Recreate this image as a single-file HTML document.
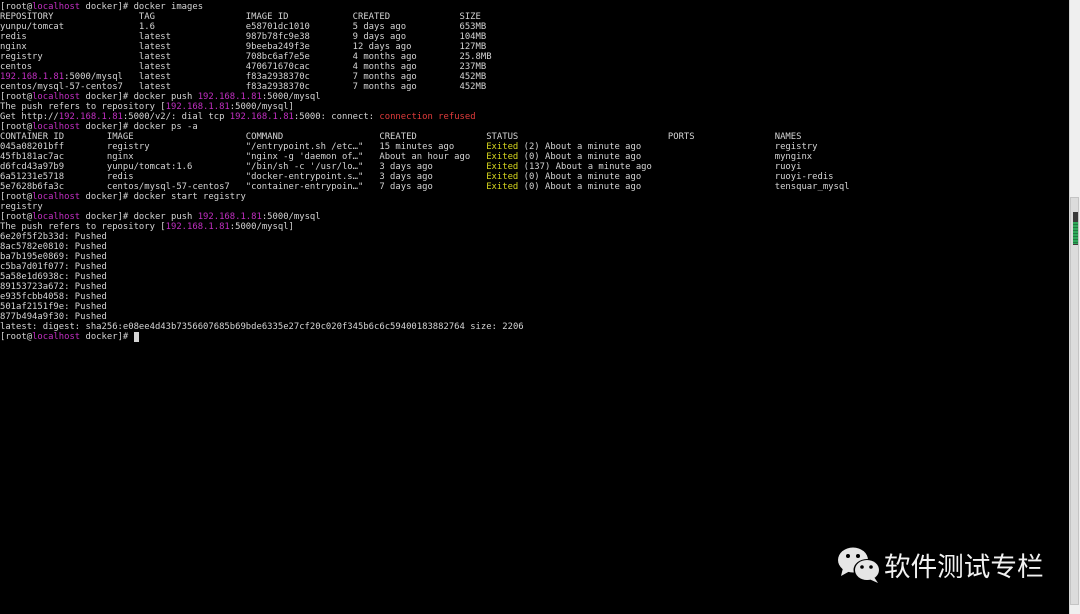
<!DOCTYPE html>
<html><head><meta charset="utf-8"><style>
html,body{margin:0;padding:0;background:#000;width:1080px;height:614px;overflow:hidden}
#t{position:absolute;left:0;top:2px;font-family:"DejaVu Sans Mono","Liberation Mono",monospace;font-size:8.9px;color:#d4d4d4}
.l{position:relative;height:10px;line-height:10px;white-space:pre}
.c{position:absolute;top:0}
.m{color:#c22fc2}.r{color:#e23c3c}.y{color:#d6d61e}
#sb{position:absolute;left:1069px;top:0;width:11px;height:614px;background:#efefef;border-left:1px solid #d8d8d8;box-sizing:border-box}
#th{position:absolute;left:1070px;top:197px;width:9px;height:408px;background:#dcdcdc;border:1px solid #c4c4c4;box-sizing:border-box}
#gr{position:absolute;left:1073px;top:212px;width:5px;height:33px;background:#3a3a3a}
#gr2{position:absolute;left:1073px;top:222px;width:5px;height:22px;background:repeating-linear-gradient(#2fa85a 0 2px,#1f7a40 2px 3px)}
#wm{position:absolute;left:884px;top:547px;font-family:"Noto Sans CJK SC",sans-serif;font-size:26.6px;color:#f2f2f2;line-height:36px}
</style></head><body>
<div id="t"><div class="l">[root@<span class="m">localhost</span> docker]# docker images</div><div class="l"><span class="c" style="left:0">REPOSITORY</span><span class="c" style="left:26ch">TAG</span><span class="c" style="left:46ch">IMAGE ID</span><span class="c" style="left:66ch">CREATED</span><span class="c" style="left:86ch">SIZE</span></div><div class="l"><span class="c" style="left:0">yunpu/tomcat</span><span class="c" style="left:26ch">1.6</span><span class="c" style="left:46ch">e58701dc1010</span><span class="c" style="left:66ch">5 days ago</span><span class="c" style="left:86ch">653MB</span></div><div class="l"><span class="c" style="left:0">redis</span><span class="c" style="left:26ch">latest</span><span class="c" style="left:46ch">987b78fc9e38</span><span class="c" style="left:66ch">9 days ago</span><span class="c" style="left:86ch">104MB</span></div><div class="l"><span class="c" style="left:0">nginx</span><span class="c" style="left:26ch">latest</span><span class="c" style="left:46ch">9beeba249f3e</span><span class="c" style="left:66ch">12 days ago</span><span class="c" style="left:86ch">127MB</span></div><div class="l"><span class="c" style="left:0">registry</span><span class="c" style="left:26ch">latest</span><span class="c" style="left:46ch">708bc6af7e5e</span><span class="c" style="left:66ch">4 months ago</span><span class="c" style="left:86ch">25.8MB</span></div><div class="l"><span class="c" style="left:0">centos</span><span class="c" style="left:26ch">latest</span><span class="c" style="left:46ch">470671670cac</span><span class="c" style="left:66ch">4 months ago</span><span class="c" style="left:86ch">237MB</span></div><div class="l"><span class="c" style="left:0"><span class="m">192.168.1.81</span>:5000/mysql</span><span class="c" style="left:26ch">latest</span><span class="c" style="left:46ch">f83a2938370c</span><span class="c" style="left:66ch">7 months ago</span><span class="c" style="left:86ch">452MB</span></div><div class="l"><span class="c" style="left:0">centos/mysql-57-centos7</span><span class="c" style="left:26ch">latest</span><span class="c" style="left:46ch">f83a2938370c</span><span class="c" style="left:66ch">7 months ago</span><span class="c" style="left:86ch">452MB</span></div><div class="l">[root@<span class="m">localhost</span> docker]# docker push <span class="m">192.168.1.81</span>:5000/mysql</div><div class="l">The push refers to repository [<span class="m">192.168.1.81</span>:5000/mysql]</div><div class="l">Get http://<span class="m">192.168.1.81</span>:5000/v2/: dial tcp <span class="m">192.168.1.81</span>:5000: connect: <span class="r">connection refused</span></div><div class="l">[root@<span class="m">localhost</span> docker]# docker ps -a</div><div class="l"><span class="c" style="left:0">CONTAINER ID</span><span class="c" style="left:20ch">IMAGE</span><span class="c" style="left:46ch">COMMAND</span><span class="c" style="left:71ch">CREATED</span><span class="c" style="left:91ch">STATUS</span><span class="c" style="left:125ch">PORTS</span><span class="c" style="left:145ch">NAMES</span></div><div class="l"><span class="c" style="left:0">045a08201bff</span><span class="c" style="left:20ch">registry</span><span class="c" style="left:46ch">"/entrypoint.sh /etc…"</span><span class="c" style="left:71ch">15 minutes ago</span><span class="c" style="left:91ch"><span class="y">Exited</span> (2) About a minute ago</span><span class="c" style="left:145ch">registry</span></div><div class="l"><span class="c" style="left:0">45fb181ac7ac</span><span class="c" style="left:20ch">nginx</span><span class="c" style="left:46ch">"nginx -g 'daemon of…"</span><span class="c" style="left:71ch">About an hour ago</span><span class="c" style="left:91ch"><span class="y">Exited</span> (0) About a minute ago</span><span class="c" style="left:145ch">mynginx</span></div><div class="l"><span class="c" style="left:0">d6fcd43a97b9</span><span class="c" style="left:20ch">yunpu/tomcat:1.6</span><span class="c" style="left:46ch">"/bin/sh -c '/usr/lo…"</span><span class="c" style="left:71ch">3 days ago</span><span class="c" style="left:91ch"><span class="y">Exited</span> (137) About a minute ago</span><span class="c" style="left:145ch">ruoyi</span></div><div class="l"><span class="c" style="left:0">6a51231e5718</span><span class="c" style="left:20ch">redis</span><span class="c" style="left:46ch">"docker-entrypoint.s…"</span><span class="c" style="left:71ch">3 days ago</span><span class="c" style="left:91ch"><span class="y">Exited</span> (0) About a minute ago</span><span class="c" style="left:145ch">ruoyi-redis</span></div><div class="l"><span class="c" style="left:0">5e7628b6fa3c</span><span class="c" style="left:20ch">centos/mysql-57-centos7</span><span class="c" style="left:46ch">"container-entrypoin…"</span><span class="c" style="left:71ch">7 days ago</span><span class="c" style="left:91ch"><span class="y">Exited</span> (0) About a minute ago</span><span class="c" style="left:145ch">tensquar_mysql</span></div><div class="l">[root@<span class="m">localhost</span> docker]# docker start registry</div><div class="l">registry</div><div class="l">[root@<span class="m">localhost</span> docker]# docker push <span class="m">192.168.1.81</span>:5000/mysql</div><div class="l">The push refers to repository [<span class="m">192.168.1.81</span>:5000/mysql]</div><div class="l">6e20f5f2b33d: Pushed</div><div class="l">8ac5782e0810: Pushed</div><div class="l">ba7b195e0869: Pushed</div><div class="l">c5ba7d01f077: Pushed</div><div class="l">5a58e1d6938c: Pushed</div><div class="l">89153723a672: Pushed</div><div class="l">e935fcbb4058: Pushed</div><div class="l">501af2151f9e: Pushed</div><div class="l">877b494a9f30: Pushed</div><div class="l">latest: digest: sha256:e08ee4d43b7356607685b69bde6335e27cf20c020f345b6c6c59400183882764 size: 2206</div><div class="l">[root@<span class="m">localhost</span> docker]# <span style="background:#d4d4d4">&nbsp;</span></div></div>
<div id="sb"></div><div id="th"></div><div id="gr"></div><div id="gr2"></div>
<svg style="position:absolute;left:837px;top:546px" width="46" height="38" viewBox="0 0 46 38">
<ellipse cx="16" cy="14" rx="15" ry="12.5" fill="#e6e6e6"/>
<path d="M6 22 L4 30 L13 25 Z" fill="#e6e6e6"/>
<circle cx="11" cy="10" r="2" fill="#000"/><circle cx="21" cy="10" r="2" fill="#000"/>
<ellipse cx="30" cy="24" rx="13.5" ry="11" fill="#000"/>
<ellipse cx="30" cy="24" rx="12" ry="10" fill="#e6e6e6"/>
<path d="M37 31 L41 37 L32 33 Z" fill="#e6e6e6"/>
<circle cx="25" cy="21" r="1.8" fill="#000"/><circle cx="34" cy="21" r="1.8" fill="#000"/>
</svg>
<div id="wm">软件测试专栏</div>
</body></html>
